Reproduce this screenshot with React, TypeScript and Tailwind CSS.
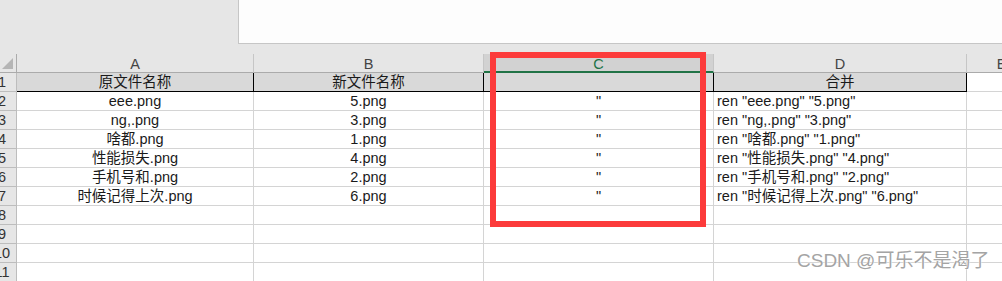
import React from "react";

const font = "font-['Liberation_Sans','Noto_Sans_CJK_SC',sans-serif]";

const cols = [
  { key: "A", w: "w-[237px]", align: "justify-center" },
  { key: "B", w: "w-[230px]", align: "justify-center" },
  { key: "C", w: "w-[230px]", align: "justify-center" },
  { key: "D", w: "w-[253px]", align: "justify-start pl-[3px]" },
  { key: "E", w: "w-[70px]", align: "justify-start" },
];

const rows: string[][] = [
  ["eee.png", "5.png", '"', 'ren "eee.png" "5.png"'],
  ["ng,.png", "3.png", '"', 'ren "ng,.png" "3.png"'],
  ["啥都.png", "1.png", '"', 'ren "啥都.png" "1.png"'],
  ["性能损失.png", "4.png", '"', 'ren "性能损失.png" "4.png"'],
  ["手机号和.png", "2.png", '"', 'ren "手机号和.png" "2.png"'],
  ["时候记得上次.png", "6.png", '"', 'ren "时候记得上次.png" "6.png"'],
  [],
  [],
  [],
  [],
  [],
];

function RowNumber({ n }: { n: number }) {
  return (
    <div className="flex h-full w-[17px] shrink-0 overflow-hidden border-r border-b border-[#bdbdbd] bg-[#e6e6e6]">
      <div className="-ml-[12px] w-[28px] shrink-0 text-center leading-[18px] text-[#333]">{n}</div>
    </div>
  );
}

export default function App() {
  return (
    <div className={`relative h-[281px] w-[1002px] overflow-hidden bg-white text-[14.5px] text-[#1a1a1a] ${font}`}>
      {/* formula / ribbon strip */}
      <div className="flex h-[44px]">
        <div className="w-[238px] bg-[#e6e6e6]" />
        <div className="flex-1 border-l border-b border-[#c6c6c6] bg-[#fdfdfd]" />
      </div>
      <div className="h-[10px] bg-[#e6e6e6]" />

      {/* column letters */}
      <div className="flex h-[19px] bg-[#e6e6e6]">
        <div className="flex w-[17px] shrink-0 items-end justify-end border-r border-b border-[#ababab] pr-[3px] pb-[3px]">
          <svg width="11" height="11" viewBox="0 0 11 11">
            <polygon points="11,0 11,11 0,11" fill="#b5b5b5" />
          </svg>
        </div>
        {cols.map((c) =>
          c.key === "C" ? (
            <div
              key={c.key}
              className={`${c.w} shrink-0 border-r border-b-2 border-r-[#c6c6c6] border-b-[#217346] bg-[#d2d2d2] pt-[2px] text-center leading-[16px] text-[#217346]`}
            >
              {c.key}
            </div>
          ) : (
            <div
              key={c.key}
              className={`${c.w} shrink-0 border-r border-b border-r-[#c6c6c6] border-b-[#ababab] pt-[2px] text-center leading-[16px] text-[#444]`}
            >
              {c.key}
            </div>
          )
        )}
      </div>

      {/* row 1: headers */}
      <div className="flex h-[19px]">
        <RowNumber n={1} />
        <div className="flex w-[237px] shrink-0 justify-center border-r border-b border-black bg-[#d9d9d9] leading-[18px]">原文件名称</div>
        <div className="flex w-[230px] shrink-0 justify-center border-r border-b border-black bg-[#d9d9d9] leading-[18px]">新文件名称</div>
        <div className="w-[230px] shrink-0 border-r border-b border-black bg-[#d9d9d9]" />
        <div className="flex w-[253px] shrink-0 justify-center border-r border-b border-black bg-[#d9d9d9] leading-[18px]">合并</div>
        <div className="w-[70px] shrink-0 border-b border-[#d4d4d4]" />
      </div>

      {rows.map((r, i) => (
        <div key={i} className="flex h-[19px]">
          <RowNumber n={i + 2} />
          {cols.map((c, j) => (
            <div
              key={c.key}
              className={`flex ${c.w} ${c.align} shrink-0 overflow-visible whitespace-nowrap border-r border-b border-[#d4d4d4] leading-[18px]`}
            >
              {r[j] ?? ""}
            </div>
          ))}
        </div>
      ))}

      {/* highlight box */}
      <div className="absolute left-[490px] top-[52px] h-[175px] w-[216px] border-[6px] border-[#fc3b3b]" />

      {/* watermark */}
      <div className="absolute left-[797px] top-[249px] text-[19px] leading-[24px] text-[#a4a4a4] [text-shadow:0_0_1px_#fff,0_0_2px_#fff]">
        CSDN @可乐不是渴了
      </div>
    </div>
  );
}
